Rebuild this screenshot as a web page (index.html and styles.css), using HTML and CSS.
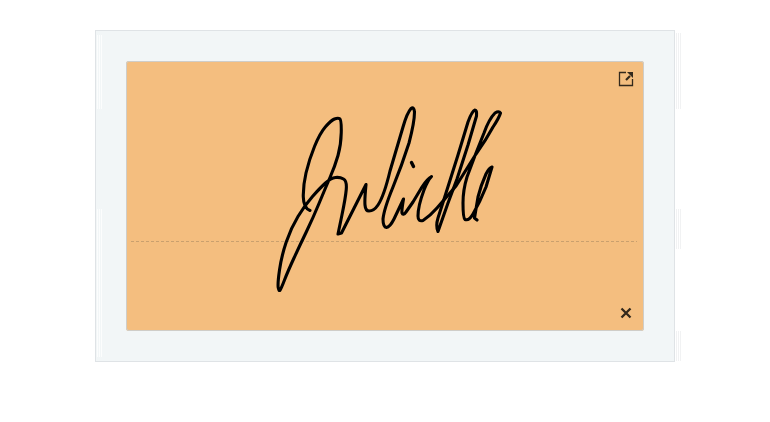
FILE: index.html
```html
<!DOCTYPE html>
<html lang="en">
<head>
<meta charset="utf-8">
<title>Signature</title>
<link rel="stylesheet" href="styles.css">
</head>
<body>
<main class="panel">
  <i class="grain grain-left grain-a"></i>
  <i class="grain grain-left grain-b"></i>
  <i class="grain grain-right grain-c"></i>
  <i class="grain grain-right grain-d"></i>
  <i class="grain grain-right grain-e"></i>
  <section class="card">
    <svg class="signature" viewBox="126 61 518 270" aria-label="Signature">
      <line class="baseline" x1="131" y1="241.5" x2="637" y2="241.5"/>
      <path class="ink" d="M310 210.5 Q303.5 208 303.3 197 Q303 186 306 173 Q309 160 314.5 146.5 Q320 133 325.5 126.75 Q331 120.5 334.5 119 Q338 117.5 339.75 118.75 Q341.5 120 341.25 132.5 Q341 145 338 155.5 Q335 166 330 177.5 Q325 189 319 203.5 Q313 218 306.5 231.5 Q300 245 294 258 Q288 271 284.5 280 Q281 289 280 290.25 Q279 291.5 278.25 287.75 Q277.5 284 279.5 270 Q281.5 256 286.25 242 Q291 228 298 216.5 Q305 205 312.5 196.5 Q320 188 325.5 183 Q331 178 335.5 177.5 Q340 177 343.5 179 Q347 181 346.25 189.5 Q345.5 198 341.75 216 L338 234 L341.5 233 L366 184.5 Q364.5 200 365 205 Q365.5 211 369 211 Q374 211 378 205 Q384 196 390 171 Q397 147 403 127 Q407 113 411 108.5 Q414 106.5 414.5 112 Q414.5 122 409 143 Q402 165 393 187 Q384 209 383 219 Q383 227 386.5 227.5 Q390 227 394 219 L403.5 199 Q401.5 211 402 213 Q403 216 406 212 L413 202 L422 187 Q427 179 431.5 176.5 Q428 180 424 190 Q418 206 418 216 Q418 222 423 220.5 Q430 216 437 208 L456 186 L476 154 Q486 140 493 127 Q499 118 500.5 113 Q499 110.5 495 113 Q489 119 484 133 L476 153 L467 177 Q463 190 463 203 Q463 218 465 219.5 Q469 221 473 214 Q480 202 486 187 L492 167 Q489 168 486 174 Q481 185 478 197 L474.5 218 L477 220"/>
      <path class="ink" d="M438 231.5 Q435.5 226 438 218 L446 193 L458 155 L468 122 Q472 111 475 110 Q477 110 476.5 116 L468 145 L457 179 L448 203 L438 231.5"/>
      <path class="ink ink-dot" d="M411.5 162.5 L413.5 166.5"/>
    </svg>
    <button class="tool tool-open" type="button" aria-label="Open">
      <svg viewBox="0 0 16 16" class="icon">
        <path class="icon-frame" d="M8 1.5H1.5V14.5H14.5V8"/>
        <path class="icon-arrow" d="M8 9L12 5"/>
        <path class="icon-head" d="M9 1H15V7Z"/>
      </svg>
    </button>
    <button class="tool tool-close" type="button" aria-label="Remove">
      <svg viewBox="0 0 12 12" class="icon-x">
        <path d="M1.5 1.5L10.5 10.5M10.5 1.5L1.5 10.5"/>
      </svg>
    </button>
  </section>
</main>
</body>
</html>
```

FILE: styles.css
```css
html, body {
  margin: 0;
  height: 100%;
  background: #fff;
}
body {
  padding: 30px 95px 0;
  box-sizing: border-box;
  width: 770px;
  height: 422px;
  overflow: hidden;
}
.panel {
  position: relative;
  width: 580px;
  height: 332px;
  box-sizing: border-box;
  padding: 30px;
  background: #f2f6f7;
  border: 1px solid #dfe3e6;
}
.grain {
  position: absolute;
  width: 6px;
  background-image: repeating-linear-gradient(90deg, var(--grain) 0 1px, transparent 1px 2px);
}
.grain-left {
  --grain: rgba(255, 255, 255, 0.75);
  left: 1px;
}
.grain-right {
  --grain: #f1f2f3;
  left: 580px;
}
.grain-a {
  top: 4px;
  height: 74px;
}
.grain-b {
  top: 178px;
  height: 148px;
}
.grain-c {
  top: 2px;
  height: 76px;
}
.grain-d {
  top: 178px;
  height: 40px;
}
.grain-e {
  top: 300px;
  height: 30px;
}
.card {
  position: relative;
  width: 518px;
  height: 270px;
  background: #f4be7f;
  border-radius: 3px;
  box-shadow: inset 0 0 0 1px #cfcdc8;
}
.signature {
  display: block;
  width: 518px;
  height: 270px;
}
.baseline {
  stroke: #c9a06e;
  stroke-width: 1;
  stroke-dasharray: 3 2;
}
.ink {
  fill: none;
  stroke: #000;
  stroke-width: 3.1;
  stroke-linejoin: round;
  stroke-linecap: round;
}
.ink-dot {
  stroke-width: 3.4;
}
.tool {
  position: absolute;
  padding: 0;
  border: 0;
  background: none;
  display: block;
  line-height: 0;
}
.tool-open {
  top: 10px;
  right: 10px;
}
.tool-close {
  right: 12px;
  bottom: 12px;
}
.icon {
  width: 16px;
  height: 16px;
}
.icon-frame {
  fill: none;
  stroke: #33291c;
  stroke-width: 1.3;
}
.icon-arrow {
  fill: none;
  stroke: #33291c;
  stroke-width: 2.2;
}
.icon-head {
  fill: #33291c;
}
.icon-x {
  width: 12px;
  height: 12px;
  fill: none;
  stroke: #33291c;
  stroke-width: 2.3;
}
```
